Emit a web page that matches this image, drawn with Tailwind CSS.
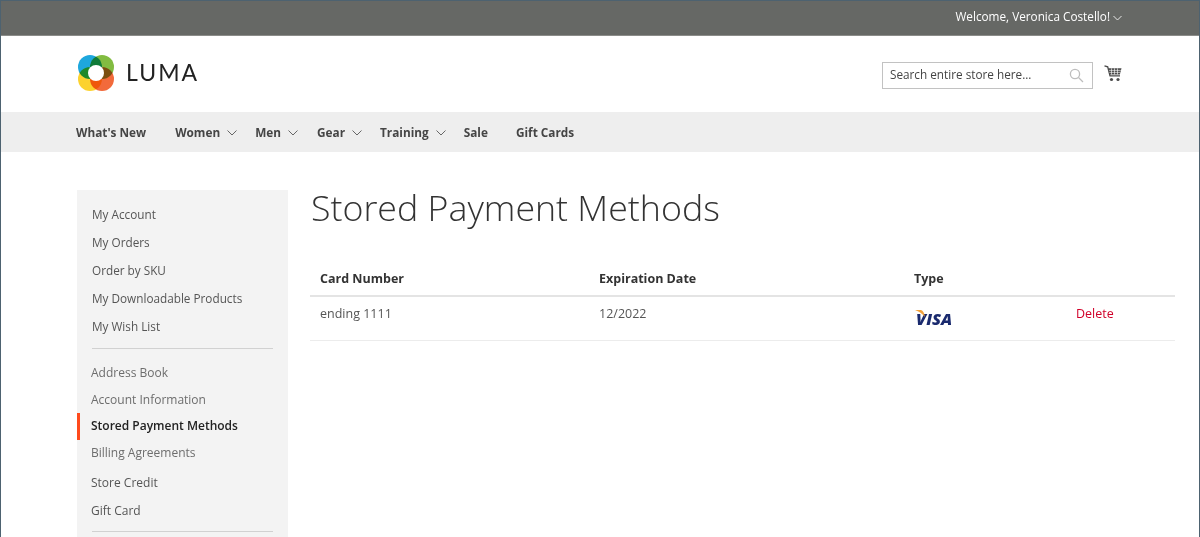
<!DOCTYPE html>
<html>
<head>
    <meta charset="UTF-8">
    <meta name="viewport" content="width=device-width, initial-scale=1.0">
    <title>Stored Payment Methods</title>
    <script src="https://cdn.jsdelivr.net/npm/@tailwindcss/browser@4"></script>
</head>
<body class="h-screen overflow-hidden bg-white font-['Open_Sans',sans-serif] text-[#333]">
    <div class="h-[537px] overflow-hidden border-x border-[#4d6270]">
        <!-- top bar -->
        <div class="h-9 bg-[#666865] border-t border-[#4d6270] border-b-[#8b8c89] border-b flex items-center justify-end pr-[77px] pb-[2px] text-white text-[11.75px]">
            <span>Welcome, Veronica Costello!</span>
            <svg class="ml-[3px] mt-px" width="9" height="6" viewBox="0 0 9 6" fill="none" stroke="#e8e8e8" stroke-width="1"><path d="M0.5 1l4 4 4-4"/></svg>
        </div>

        <!-- logo and search -->
        <div class="h-[76px] flex items-center justify-between pl-[76px] pr-[77px]">
            <div class="flex items-center -mt-[2px]">
                <svg width="38" height="38" viewBox="0 0 38 38">
                    <circle cx="13" cy="13" r="12" fill="#1ea7dd" style="mix-blend-mode:multiply"/>
                    <circle cx="25" cy="13" r="12" fill="#82bc41" style="mix-blend-mode:multiply"/>
                    <circle cx="13" cy="25" r="12" fill="#fcd22f" style="mix-blend-mode:multiply"/>
                    <circle cx="25" cy="25" r="12" fill="#f26a3b" style="mix-blend-mode:multiply"/>
                    <circle cx="19" cy="19" r="8" fill="#fff"/>
                </svg>
                <span class="ml-[11px] -mt-[1px] font-['Lato',sans-serif] text-[23px] leading-none tracking-[2px] text-[#222]">LUMA</span>
            </div>
            <div class="flex items-start mt-[2px]">
                <div class="w-[211px] h-[27px] border border-[#c2c2c2] flex items-center justify-between pl-[7px] pr-[8px] text-[11.75px] text-[#444]">
                    <span>Search entire store here...</span>
                    <svg width="15" height="15" viewBox="0 0 15 15" fill="none" stroke="#bdbdbd" stroke-width="1.3"><circle cx="6" cy="6" r="4.6"/><path d="M9.5 9.5l4.5 4.5"/></svg>
                </div>
                <svg class="ml-[11px] mt-[3px]" width="18" height="17" viewBox="0 0 18 17">
                    <path d="M0.5 0.8l3.2 1 2.3 9h10" fill="none" stroke="#4a4a4a" stroke-width="1.3"/>
                    <path d="M4.2 3.3h13.3l-1.6 6.2H5.8z" fill="#4a4a4a"/>
                    <path d="M7.5 3.3v6.2M10.5 3.3v6.2M13.5 3.3v6.2M4.9 5.4h12M5.4 7.4h11" stroke="#fff" stroke-width="0.6"/>
                    <circle cx="7.5" cy="14.5" r="1.6" fill="#4a4a4a"/><circle cx="14" cy="14.5" r="1.6" fill="#4a4a4a"/>
                </svg>
            </div>
        </div>

        <!-- main nav -->
        <div class="h-10 bg-[#eeeeee] flex items-center pl-[75px] pt-[1px] text-[11.8px] font-bold text-[#454545]">
            <span>What's New</span>
            <span class="ml-[29px]">Women</span>
            <svg class="ml-[7px] mt-px" width="10" height="6" viewBox="0 0 10 6" fill="none" stroke="#666" stroke-width="1"><path d="M0.5 0.5l4.5 4.5 4.5-4.5"/></svg>
            <span class="ml-[18px]">Men</span>
            <svg class="ml-[7px] mt-px" width="10" height="6" viewBox="0 0 10 6" fill="none" stroke="#666" stroke-width="1"><path d="M0.5 0.5l4.5 4.5 4.5-4.5"/></svg>
            <span class="ml-[19px]">Gear</span>
            <svg class="ml-[7px] mt-px" width="10" height="6" viewBox="0 0 10 6" fill="none" stroke="#666" stroke-width="1"><path d="M0.5 0.5l4.5 4.5 4.5-4.5"/></svg>
            <span class="ml-[18px]">Training</span>
            <svg class="ml-[7px] mt-px" width="10" height="6" viewBox="0 0 10 6" fill="none" stroke="#666" stroke-width="1"><path d="M0.5 0.5l4.5 4.5 4.5-4.5"/></svg>
            <span class="ml-[18px]">Sale</span>
            <span class="ml-[28px]">Gift Cards</span>
        </div>

        <!-- content -->
        <div class="flex pt-[38px] pl-[76px] pr-6">
            <aside class="w-[211px] shrink-0 h-[400px] bg-[#f3f3f3] pt-[11px] text-[11.75px] text-[#555]">
                <ul class="pl-[15px]">
                    <li class="h-7 flex items-center">My Account</li>
                    <li class="h-7 flex items-center">My Orders</li>
                    <li class="h-7 flex items-center">Order by SKU</li>
                    <li class="h-7 flex items-center">My Downloadable Products</li>
                    <li class="h-[27.5px] flex items-center">My Wish List</li>
                </ul>
                <div class="mx-[15px] mt-[7.5px] mb-[11px] border-t border-[#d1d1d1]"></div>
                <ul class="text-[12px]">
                    <li class="h-[26.5px] pl-[14px] flex items-center text-[#6d6d6d]">Address Book</li>
                    <li class="h-[26.5px] pl-[14px] flex items-center text-[#6d6d6d]">Account Information</li>
                    <li class="h-[26.5px] pl-[11px] flex items-center border-l-[3px] border-[#ff4a1c] font-semibold text-[#222]">Stored Payment Methods</li>
                    <li class="h-[26.5px] pl-[14px] flex items-center text-[#6d6d6d]">Billing Agreements</li>
                </ul>
                <ul class="pl-[14px] mt-[2.5px] text-[12px]">
                    <li class="h-7 flex items-center">Store Credit</li>
                    <li class="h-7 flex items-center">Gift Card</li>
                </ul>
                <div class="mx-[15px] mt-[6px] border-t border-[#d1d1d1]"></div>
            </aside>

            <main class="flex-1 pl-[22px]">
                <h1 class="ml-px font-light text-[35.75px] leading-[40px] text-[#333] -mt-[3px]">Stored Payment Methods</h1>
                <div class="mt-[38px] w-[865px] text-[12.5px]">
                    <div class="h-[32px] flex items-center font-bold text-[#333] border-b-2 border-[#e4e4e4] pl-[10px] pb-[1px]">
                        <span class="w-[279px]">Card Number</span>
                        <span class="w-[315px]">Expiration Date</span>
                        <span>Type</span>
                    </div>
                    <div class="h-[44px] flex items-start border-b border-[#ececec] pl-[10px] pt-[8px] text-[#555]">
                        <span class="w-[279px]">ending 1111</span>
                        <span class="w-[315px]">12/2022</span>
                        <span class="w-[162px] relative mt-[6px] font-extrabold italic text-[16.5px] leading-[15px] text-[#1a2a6e] pl-[2px]">VISA<svg class="absolute left-[1px] -top-[1px]" width="10" height="7" viewBox="0 0 10 7"><path d="M0 0h6q3 1 4 7Q6 2 0 0z" fill="#f2a13a"/></svg></span>
                        <span class="text-[#d10029]">Delete</span>
                    </div>
                </div>
            </main>
        </div>
    </div>
</body>
</html>
